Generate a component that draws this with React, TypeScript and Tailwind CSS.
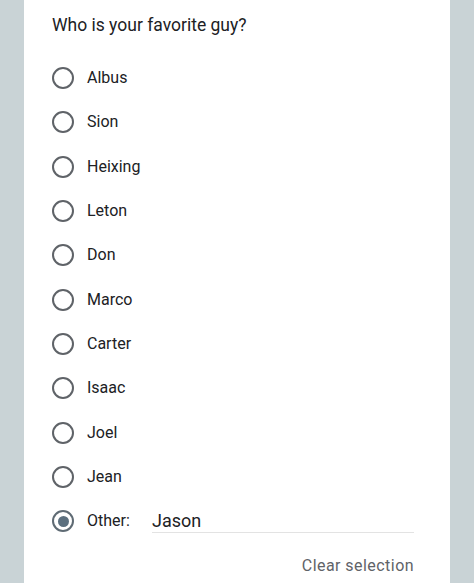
import { useState } from 'react'

const options = ['Albus', 'Sion', 'Heixing', 'Leton', 'Don', 'Marco', 'Carter', 'Isaac', 'Joel', 'Jean']

function Radio({ checked }: { checked: boolean }) {
  return (
    <span
      className={
        'flex h-[22px] w-[22px] shrink-0 items-center justify-center rounded-full border-2 ' +
        (checked ? 'border-[#5f6b74]' : 'border-[#5f6368]')
      }
    >
      {checked && <span className="h-[11px] w-[11px] rounded-full bg-[#5b6f7e]" />}
    </span>
  )
}

export default function App() {
  const [selected, setSelected] = useState('other')
  const [other, setOther] = useState('Jason')

  return (
    <div className="flex min-h-[583px] bg-[#c9d3d6] font-['Roboto',sans-serif]">
      <div className="ml-[24px] w-[426px] bg-white pl-[28px] pr-[36px]">
        <h2 className="pt-[13px] text-[17.5px] leading-[24px] text-[#202124]">Who is your favorite guy?</h2>

        <div className="mt-[19px] flex flex-col">
          {options.map((name) => (
            <label
              key={name}
              onClick={() => setSelected(name)}
              className="flex h-[44.3px] cursor-pointer items-center gap-[13px] text-[16px] text-[#202124]"
            >
              <Radio checked={selected === name} />
              {name}
            </label>
          ))}

          {/* ── Other ── */}
          <div className="flex h-[44.3px] items-center" onClick={() => setSelected('other')}>
            <Radio checked={selected === 'other'} />
            <span className="ml-[13px] w-[65px] text-[16px] text-[#202124]">Other:</span>
            <input
              value={other}
              onChange={(e) => setOther(e.target.value)}
              className="h-[24px] flex-1 border-b border-[#e3e3e3] bg-transparent text-[18px] text-[#202124] outline-none"
            />
          </div>
        </div>

        <div className="mt-[11px] flex justify-end">
          <button
            onClick={() => setSelected('')}
            className="text-[16px] tracking-[0.45px] text-[#5f6368]"
          >
            Clear selection
          </button>
        </div>
      </div>
    </div>
  )
}
